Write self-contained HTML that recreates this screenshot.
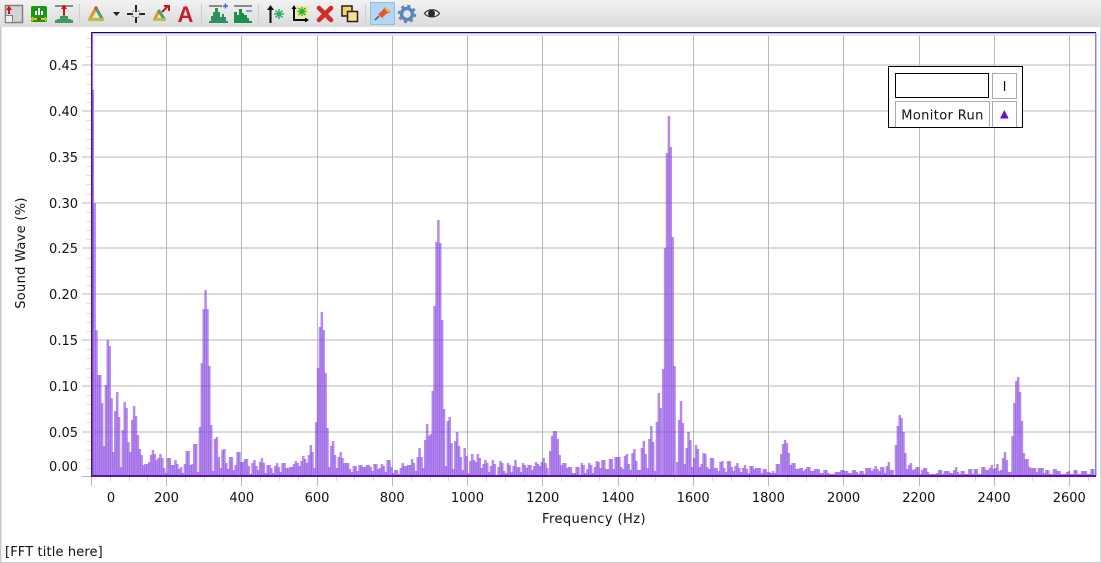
<!DOCTYPE html>
<html><head><meta charset="utf-8"><style>
html,body{margin:0;padding:0;background:#fff}
body{width:1101px;height:563px;overflow:hidden;position:relative}
svg{position:absolute;left:0;top:0}
text{font-family:"DejaVu Sans",sans-serif;font-size:13px;fill:#111}
</style></head><body>
<svg id="s" width="1101" height="563" viewBox="0 0 1101 563" xmlns="http://www.w3.org/2000/svg">
<defs><linearGradient id="tb" x1="0" y1="0" x2="0" y2="1"><stop offset="0" stop-color="#f2f2f2"/><stop offset="1" stop-color="#dbdbdb"/></linearGradient>
<filter id="soft" filterUnits="userSpaceOnUse" x="85" y="30" width="1016" height="450"><feGaussianBlur stdDeviation="0.35"/></filter>
<filter id="ic" filterUnits="userSpaceOnUse" x="0" y="0" width="460" height="27"><feGaussianBlur stdDeviation="0.25"/></filter></defs>
<rect width="1101" height="563" fill="#fff"/>
<rect x="0" y="0" width="1101" height="27" fill="url(#tb)"/>
<rect x="0" y="27" width="1.5" height="536" fill="#c8c8c8"/>
<rect x="0" y="562" width="1101" height="1" fill="#c8c8c8"/>
<rect x="1100" y="27" width="1" height="536" fill="#d8d8d8"/>
<g fill="#cfcfcf"><rect x="79" y="4" width="1" height="19"/><rect x="201" y="4" width="1" height="19"/><rect x="258" y="4" width="1" height="19"/><rect x="365" y="4" width="1" height="19"/></g>
<rect x="370.500" y="2.500" width="24" height="22" fill="#b4d6f2" stroke="#8cc0ec"/>
<g filter="url(#ic)">
<!-- icon 1 -->
<rect x="5.500" y="5.500" width="17" height="17" fill="#d4d4d4" stroke="#808080" stroke-width="1.500"/><rect x="5.500" y="15.500" width="7" height="7" fill="#eee" stroke="#808080"/><path d="M9 14V9" stroke="#c81818" stroke-width="2"/><path d="M6 10L9 5.500L12 10Z" fill="#c81818"/>
<!-- icon 2 -->
<rect x="31" y="6" width="16" height="16" rx="2" fill="#129a12"/><path d="M35 15V11h2v4zM38 15V8h2v7zM41 15V11h2v4z" fill="#fff"/><path d="M33 19H45" stroke="#f0f020" stroke-width="1.500"/><path d="M33 17l-1.500 2 1.500 2M45 17l1.500 2-1.500 2" stroke="#f0f020" fill="none"/><rect x="37" y="18" width="4" height="2" fill="#d02020"/>
<!-- icon 3 -->
<path d="M55 6H73" stroke="#8a8a8a" stroke-width="2"/><path d="M64 16V8" stroke="#e01010" stroke-width="2"/><path d="M61 9L64 4.500L67 9Z" fill="#e01010"/><path d="M55 23V20h2v-1h3v-3h3v-1h2v1h3v3h3v1h2v3z" fill="#3f9a5f"/>
<!-- triangle -->
<path d="M96 8L89.500 19.500" stroke="#e8942c" stroke-width="3.200" stroke-linecap="round"/><path d="M96 8L102.500 19.500" stroke="#4aa070" stroke-width="3.200" stroke-linecap="round"/><path d="M89.500 19.500H102.500" stroke="#b8c040" stroke-width="3.200" stroke-linecap="round"/><path d="M94.500 8L97.500 8" stroke="#c85040" stroke-width="3"/>
<path d="M113 12h7l-3.500 4z" fill="#222"/>
<!-- crosshair -->
<path d="M136 5v7M136 17v6M127 14h6M139 14h6" stroke="#222" stroke-width="2"/><circle cx="136" cy="14" r="4" fill="none" stroke="#666" stroke-dasharray="1.500 1.500"/>
<!-- triangle arrow -->
<path d="M159 11L154.500 19.500" stroke="#e8942c" stroke-width="3" stroke-linecap="round"/><path d="M159 11L164.500 19.500" stroke="#4aa070" stroke-width="3" stroke-linecap="round"/><path d="M154.500 19.500H164.500" stroke="#b8c040" stroke-width="3" stroke-linecap="round"/><path d="M162 12L168 6M164 6h5v5" stroke="#c81818" stroke-width="2" fill="none"/>
<!-- spectrum plus -->
<path d="M209 23v-2h2v-5h2v-4h2v-4h3v4h2v5h2v-3h2v3h2v4h2v2z" fill="#2f8f5f"/><path d="M209 6H222" stroke="#8a8a8a" stroke-width="2"/><path d="M223 6h5M225.500 3.500v5" stroke="#3a6ec8" stroke-width="1.500"/>
<!-- spectrum minus -->
<path d="M234 23V12h3v3h2V9h3v4h2v2h3v3h2v3h3v2z" fill="#1f8f4f"/><path d="M234 6H252" stroke="#8a8a8a" stroke-width="2"/><path d="M246 11h6" stroke="#5a8ad8" stroke-width="1.500"/>
<!-- arrow star -->
<path d="M270.500 23V9" stroke="#111" stroke-width="2"/><path d="M267 10L270.500 5L274 10Z" fill="#111"/><path d="M279 9v10M274 14h10M275.500 10.500l7 7M282.500 10.500l-7 7" stroke="#2aae6a" stroke-width="1.500"/>
<!-- axes star -->
<rect x="296" y="6" width="12" height="12" fill="#f2e79a"/><path d="M302 7v9M297.500 11.500h9M298.500 8l7 7M305.500 8l-7 7" stroke="#2aae3a" stroke-width="1.400"/><path d="M294 7V20H307" stroke="#111" stroke-width="2" fill="none"/><path d="M291.500 9L294 5L296.500 9ZM305 17.500L309 20L305 22.500Z" fill="#111"/>
<!-- red X -->
<path d="M319 8L331 20M331 8L319 20" stroke="#d42c2c" stroke-width="4.500" stroke-linecap="round"/>
<!-- squares -->
<rect x="342" y="6" width="10" height="10" fill="#f6d860" stroke="#222" stroke-width="1.500"/><rect x="347.500" y="11.500" width="10" height="10" fill="#f8e090" stroke="#222" stroke-width="1.500"/>
<!-- pin -->
<path d="M385 7L391 12L386 14L382 18L378 14L382 11Z" fill="#e8532a"/><path d="M385 7L391 12L388 12.500L384.500 9Z" fill="#f0b040"/><path d="M379 16L375 20" stroke="#555" stroke-width="1.500"/>
<!-- gear -->
<circle cx="407" cy="14" r="5.500" fill="none" stroke="#5a86c0" stroke-width="3.500"/><circle cx="407" cy="14" r="8" fill="none" stroke="#5a86c0" stroke-width="2.500" stroke-dasharray="3 3.300"/>
<!-- eye -->
<path d="M424.500 13.500C428 8.500 436 8.500 439.500 13.500C436 18 428 18 424.500 13.500Z" fill="#f4f4f4" stroke="#333" stroke-width="1.200"/><circle cx="431.500" cy="13.500" r="3.500" fill="#332820"/>
</g>
<text x="177.500" y="22" style="font-family:'Liberation Sans',sans-serif;font-size:22px;font-weight:bold;fill:#c4202c">A</text>

<!-- plot area -->
<rect x="92" y="33" width="1004" height="443" fill="#fff"/>
<g id="grid" stroke="#b8b8b8" stroke-width="1" fill="none"></g>
<rect x="92" y="33.500" width="1004" height="2.500" fill="#e6e6ff"/>
<rect x="92.500" y="33" width="2" height="443" fill="#e8e8ff"/>
<g id="ticks" fill="none"></g>
<g id="bars" filter="url(#soft)"></g>
<rect x="91" y="32" width="1005" height="1.200" fill="#140a50"/>
<rect x="91" y="32" width="1.500" height="445" fill="#4a0ca0"/>
<rect x="1095" y="33" width="1.500" height="443" fill="#8484d8"/>
<rect x="91" y="475" width="1005" height="2" fill="#5a10b4"/>
<g id="labels"></g>
<text transform="translate(25,253) rotate(-90)" text-anchor="middle" letter-spacing="0.3">Sound Wave (%)</text>
<text x="594" y="523" text-anchor="middle" letter-spacing="0.42">Frequency (Hz)</text>
<text x="5" y="556" letter-spacing="0.13">[FFT title here]</text>

<!-- legend -->
<rect x="888.500" y="66.500" width="134" height="61" fill="#fff" stroke="#000"/>
<rect x="895.500" y="73.500" width="93" height="24" fill="#fff" stroke="#000"/>
<rect x="992.500" y="73.500" width="24" height="25" fill="#fff" stroke="#aaa"/>
<text x="1004.500" y="91" text-anchor="middle">I</text>
<path d="M895.500 127V101.500H989.500V127M992.500 127V101.500H1016.500V127" fill="#fff" stroke="#aaa"/>
<text x="942.500" y="119.500" text-anchor="middle" letter-spacing="0.36">Monitor Run</text>
<path d="M1000 118.500L1004.300 110L1008.700 118.500Z" fill="#6410c4"/>
</svg>
<script>
var N="http://www.w3.org/2000/svg";
function el(p,t,a,txt){var e=document.createElementNS(N,t);for(var k in a)e.setAttribute(k,a[k]);if(txt)e.textContent=txt;document.getElementById(p).appendChild(e);}
var x,y,i;
for(i=1;i<=13;i++){x=91+i*75.23;el("grid","path",{d:"M"+(Math.round(x)+.5)+" 33V476"});}
var vals=["0.45","0.40","0.35","0.30","0.25","0.20","0.15","0.10","0.05"];
for(i=0;i<9;i++){y=65.3+i*45.79;el("grid","path",{d:"M92 "+(Math.round(y)+.0)+"H1095"});
 el("labels","text",{x:78,y:Math.round(y)+5,"text-anchor":"end"},vals[i]);
 el("ticks","path",{d:"M82 "+Math.round(y)+"H91",stroke:"#b8b8b8"});}
el("labels","text",{x:78,y:471,"text-anchor":"end"},"0.00");
el("ticks","path",{d:"M82 476.500H91",stroke:"#b8b8b8"});
for(i=-3;i<49;i++){y=65.3+i*9.158;if(i%5==0||y<34||y>476)continue;el("ticks","path",{d:"M86 "+Math.round(y)+".5H91",stroke:"#e0e0e0"});}
el("ticks","path",{d:"M91.500 477V486",stroke:"#b8b8b8"});
for(i=1;i<=13;i++){x=91+i*75.23;el("ticks","path",{d:"M"+(Math.round(x)+.5)+" 477V486",stroke:"#b8b8b8"});
 el("labels","text",{x:x+.3,y:502,"text-anchor":"middle"},String(i*200));}
for(i=1;i<=53;i++){if(i%4==0)continue;x=91+i*18.81;if(x>1095)continue;el("ticks","path",{d:"M"+(Math.round(x)+.5)+" 477V481",stroke:"#d8d8d8"});}
el("labels","text",{x:111,y:502,"text-anchor":"middle"},"0");
function S(x0,a){for(var j=0;j<a.length;j++){var h=a[j],X=x0+1.88*j;if(X>1094)break;
 el("bars","rect",{x:X.toFixed(2),y:476-h,width:2.5,height:h,fill:"rgba(130,60,225,.6)"});}}
S(91.5,[386,273,146,101,101,73,30,91,136,130,78,24,65,84,59,9,46,74,68,34,24,56,70,60,41,27,21,11,12,12,14,21,26,22,16,18,22,18,8,3,18,18,11,11,16,12,7,9,3,12,25,25,11,12,32,32,4]);
S(198.7,[49,113,167,186,167,110,51,5,37,39,19,8,26,27,13,7,19,19,6,11,24,24,14,14,17,17,10,2,13,16,10,6,14,18,13,3,11,11,8,3,10,13,9,4,13,13,8,8,9,9,12,15,13,10,15,20,17,13,21,31]);
S(311.2,[24,8,54,108,149,164,146,103,48,9,30,35,21,8,19,24,18,13,13,13,7,4,10,10,5,11,11,9,9,11,11,9,5,12,12,7,8,12,10,4,16,16,9,3,6,6,2,8,13,10,10,11,11,17,13,5,19,28,19,8,36,52,40,42]);
S(431.5,[85,170,234,256,233,156,67,10,55,59,33,7,35,44,30,19,6,28,20,3,15,22,16,14,22,18,8,12,16,13,4,10,16,12,1,9,15,13,5,3,13,11,4,10,16,9,9,4,13,11,8,11,11,6,10,14,12,10,14,18,13,8]);
S(549,[25,40,45,45,37,21,11,13,13,8,9,9,3,3,9,9]);
S(580.5,[13,11,3,7,13,11,3,9,15,14,8,16,16,7,7,17,17,7,19,19,19,9,7,20,22,12,6,23,27,15,6,6,28,35,22,8,37,50,34,5,54,83,68]);
S(662,[107,228,323,360,329,239,110]);
S(676,[14,56,75,53,12,28,44,36,9,18,31,27,9,12,23,22,9,7,18,18,8,8,5,14,15,8,4,15,15,9,5,10,13,8,4,8,11,7,3,10,10,7,8,8,8,3,7,7,4,4,3,5,3,12,12]);
S(780,[22,32,36,33,23,11,13,13,7,7,8,8,5,7,9,9,5,5,7,7,7,3,3,6,6,3,2,2,2,4,4,4,6,6,5,5,3]);
S(850,[3,6,6,4,2,5,5,2,8,8,8,5,7,10,7,5,9,9,3,10,14,6,6]);
S(894.7,[31,50,61,58,44,23,7,11,13,6,7,9,9,2,6,8,8,4,2,2,2,2,3,6,6,2,5,5,5,3,3,6,9,4,2,5,5,2,2,7,7,2,7,7,2,2,9,9,6,6,8,11,7,8,12,5,6,18,24,16,4,4]);
S(1011.3,[40,73,95,99,84,55,23,17,17,9,8,8,8,4,8,8,8,3,6,6,2,2,7,7,5,5,2,2,2,4,5,2,2,6,6,2,2,5,5,5,2,2,7,7,5]);
</script>
</body></html>
